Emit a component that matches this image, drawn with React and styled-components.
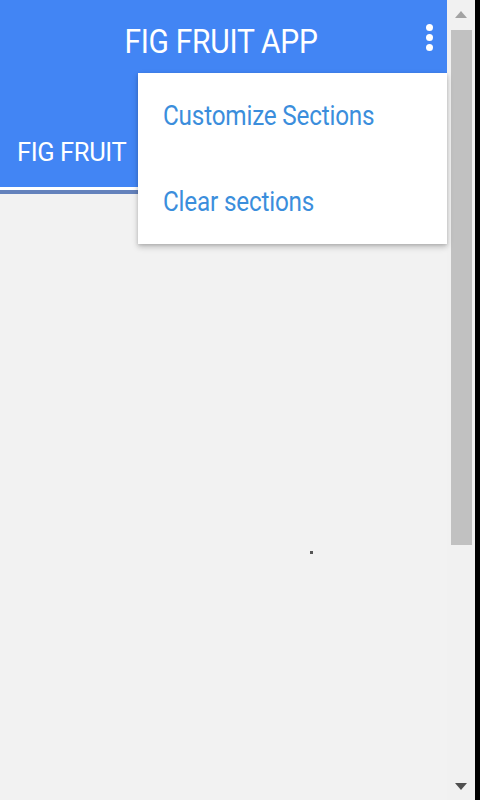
import React from "react";
import styled, { createGlobalStyle } from "styled-components";

const GlobalStyle = createGlobalStyle`
  html, body {
    margin: 0;
    padding: 0;
    background: #000;
    font-family: Roboto, "Liberation Sans", sans-serif;
  }
`;

export default function App() {
  return (
    <>
      <GlobalStyle />
      <Frame>
        <Page>
          <Header>
            <Toolbar>
              <Title>FIG FRUIT APP</Title>
              <MoreButton aria-label="More options">
                <DotIcon />
                <DotIcon />
                <DotIcon />
              </MoreButton>
            </Toolbar>
            <TabRow>
              <Tab $active>FIG FRUIT</Tab>
            </TabRow>
            <Menu>
              <MenuItem>Customize Sections</MenuItem>
              <MenuItem>Clear sections</MenuItem>
            </Menu>
          </Header>
          <TabShadow />
          <Content>
            <Speck />
          </Content>
        </Page>
        <Scrollbar>
          <Arrow $up />
          <Track>
            <Thumb />
          </Track>
          <Arrow />
        </Scrollbar>
        <Edge />
      </Frame>
    </>
  );
}

const Frame = styled.div`
  display: flex;
  width: 480px;
  height: 800px;
  overflow: hidden;
`;

const Page = styled.div`
  width: 447px;
  display: flex;
  flex-direction: column;
  background: #f2f2f2;
`;

const Header = styled.header`
  position: relative;
  background: #4285f4;
  height: 190px;
  display: flex;
  flex-direction: column;
`;

const Toolbar = styled.div`
  height: 84px;
  display: flex;
  align-items: center;
  justify-content: center;
  position: relative;
`;

const Title = styled.h1`
  margin: -1px 5px 0 0;
  color: #fff;
  font-weight: 400;
  font-size: 30px;
  letter-spacing: -0.3px;
  transform: scaleY(1.12);
`;

const MoreButton = styled.div`
  position: absolute;
  right: 14px;
  top: 24px;
  display: flex;
  flex-direction: column;
  gap: 3px;
`;

const DotIcon = styled.span`
  width: 7px;
  height: 7px;
  border-radius: 50%;
  background: #fff;
`;

const TabRow = styled.div`
  flex: 1;
  display: flex;
  align-items: flex-end;
`;

const Tab = styled.div`
  width: 150px;
  box-sizing: border-box;
  padding: 0 0 22px 17px;
  color: #fff;
  font-size: 25.5px;
  letter-spacing: -0.4px;
  line-height: 26px;
  border-bottom: 3px solid ${(p) => (p.$active ? "#fff" : "transparent")};
`;

const TabShadow = styled.div`
  height: 4px;
  background: #4b6fb3;
  opacity: 0.85;
`;

const Menu = styled.div`
  position: absolute;
  left: 138px;
  right: 0;
  top: 73px;
  height: 171px;
  background: #fff;
  box-shadow: 0 3px 6px rgba(0, 0, 0, 0.22), 0 1px 3px rgba(0, 0, 0, 0.12);
  display: flex;
  flex-direction: column;
  z-index: 2;
`;

const MenuItem = styled.div`
  flex: 1;
  display: flex;
  align-items: center;
  padding-left: 25px;
  color: #3b8edc;
  font-size: 24.3px;
  letter-spacing: -0.2px;
  transform-origin: left center;
  transform: scaleY(1.1);
`;

const Content = styled.main`
  flex: 1;
  padding: 357px 0 0 310px;
`;

const Speck = styled.div`
  width: 3px;
  height: 3px;
  background: #555;
`;

const Scrollbar = styled.div`
  width: 28px;
  background: #f1f1f1;
  display: flex;
  flex-direction: column;
  align-items: center;
`;

const Arrow = styled.div`
  height: 30px;
  display: flex;
  align-items: center;
  justify-content: center;
  &::before {
    content: "";
    border-left: 6px solid transparent;
    border-right: 6px solid transparent;
    ${(p) =>
      p.$up
        ? "border-bottom: 7px solid #a3a3a3; margin-top: -2px;"
        : "border-top: 7px solid #505050; margin-top: 2px;"}
  }
`;

const Track = styled.div`
  flex: 1;
  width: 100%;
  display: flex;
  justify-content: center;
`;

const Thumb = styled.div`
  width: 21px;
  height: 515px;
  background: #c1c1c1;
`;

const Edge = styled.div`
  width: 5px;
  background: #000;
`;
